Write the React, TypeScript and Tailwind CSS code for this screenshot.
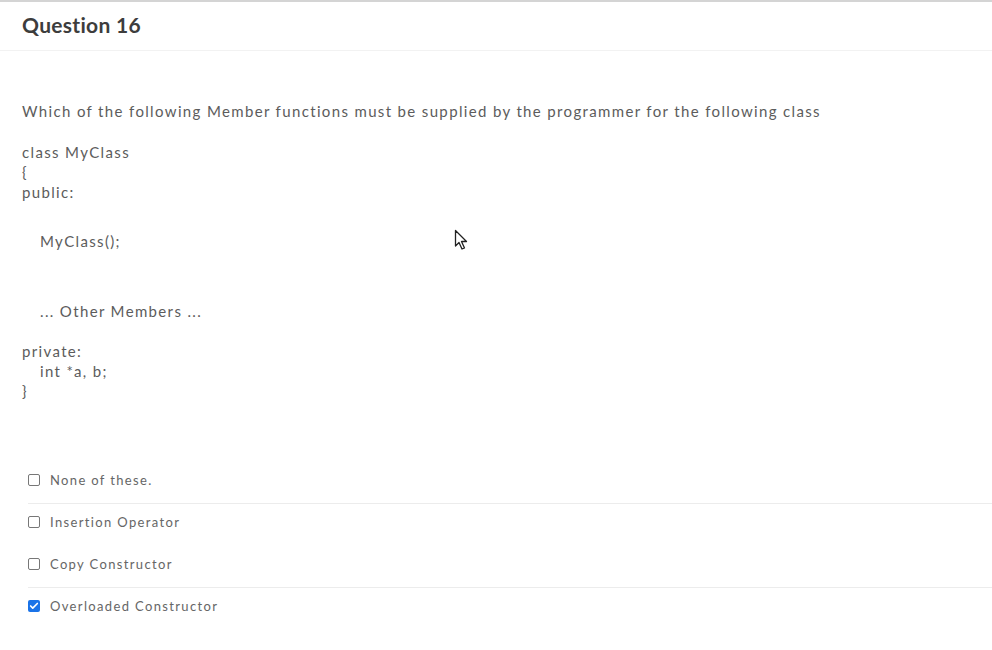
import { Check } from 'lucide-react';

const answers = [
  { label: 'None of these.', checked: false },
  { label: 'Insertion Operator', checked: false },
  { label: 'Copy Constructor', checked: false },
  { label: 'Overloaded Constructor', checked: true },
];

function Cursor() {
  return (
    <svg className="absolute left-[454px] top-[229px]" width="18" height="22" viewBox="0 0 18 22">
      <path d="M1.5 1.5 L1.5 17 L5 13.5 L8 20 L10.5 19 L7.5 12.5 L12.5 12.5 Z" fill="#fff" stroke="#222" strokeWidth="1.3" strokeLinejoin="round" />
    </svg>
  );
}

export default function App() {
  return (
    <div className="relative min-h-[650px] bg-white font-['Lato','Liberation_Sans',sans-serif] text-[#5c5c5c]">
      <div className="h-[2px] bg-[#d4d4d4]" />

      {/* Header */}
      <div className="h-[49px] border-b border-[#f2f2f2] pl-[22px] pt-[9px]">
        <h2 className="text-[21px] font-bold leading-[28px] tracking-[0.3px] text-[#3d3d3d]">Question 16</h2>
      </div>

      <div className="pl-[22px] pt-[50px] text-[15px] leading-[20px] tracking-[1.35px]">
        <p>Which of the following Member functions must be supplied by the programmer for the following class</p>

        <div className="mt-[21px]">
          <p>class MyClass</p>
          <p>{'{'}</p>
          <p>public:</p>
        </div>
        <p className="mt-[29px] pl-[18px]">MyClass();</p>
        <p className="mt-[50px] pl-[18px]">... Other Members ...</p>
        <div className="mt-[20px]">
          <p>private:</p>
          <p className="pl-[18px]">int *a, b;</p>
          <p>{'}'}</p>
        </div>
      </div>

      {/* Answers */}
      <div className="mt-[61px] pl-[28px] text-[13px] leading-[16px] tracking-[1.35px] text-[#666]">
        {answers.map((a, i) => (
          <div
            key={a.label}
            className={`flex h-[42px] items-start gap-[10px] pt-[10px] ${i === 0 || i === 2 ? 'border-b border-[#ececec]' : ''}`}
          >
            <span className="flex h-[16px] items-center">
              {a.checked ? (
                <span className="flex h-[12px] w-[12px] items-center justify-center rounded-[2px] bg-[#1a73e8]">
                  <Check className="h-[10px] w-[10px] text-white" strokeWidth={4} />
                </span>
              ) : (
                <span className="h-[12px] w-[12px] rounded-[2px] border border-[#777] bg-white" />
              )}
            </span>
            <span>{a.label}</span>
          </div>
        ))}
      </div>

      <Cursor />
    </div>
  );
}
